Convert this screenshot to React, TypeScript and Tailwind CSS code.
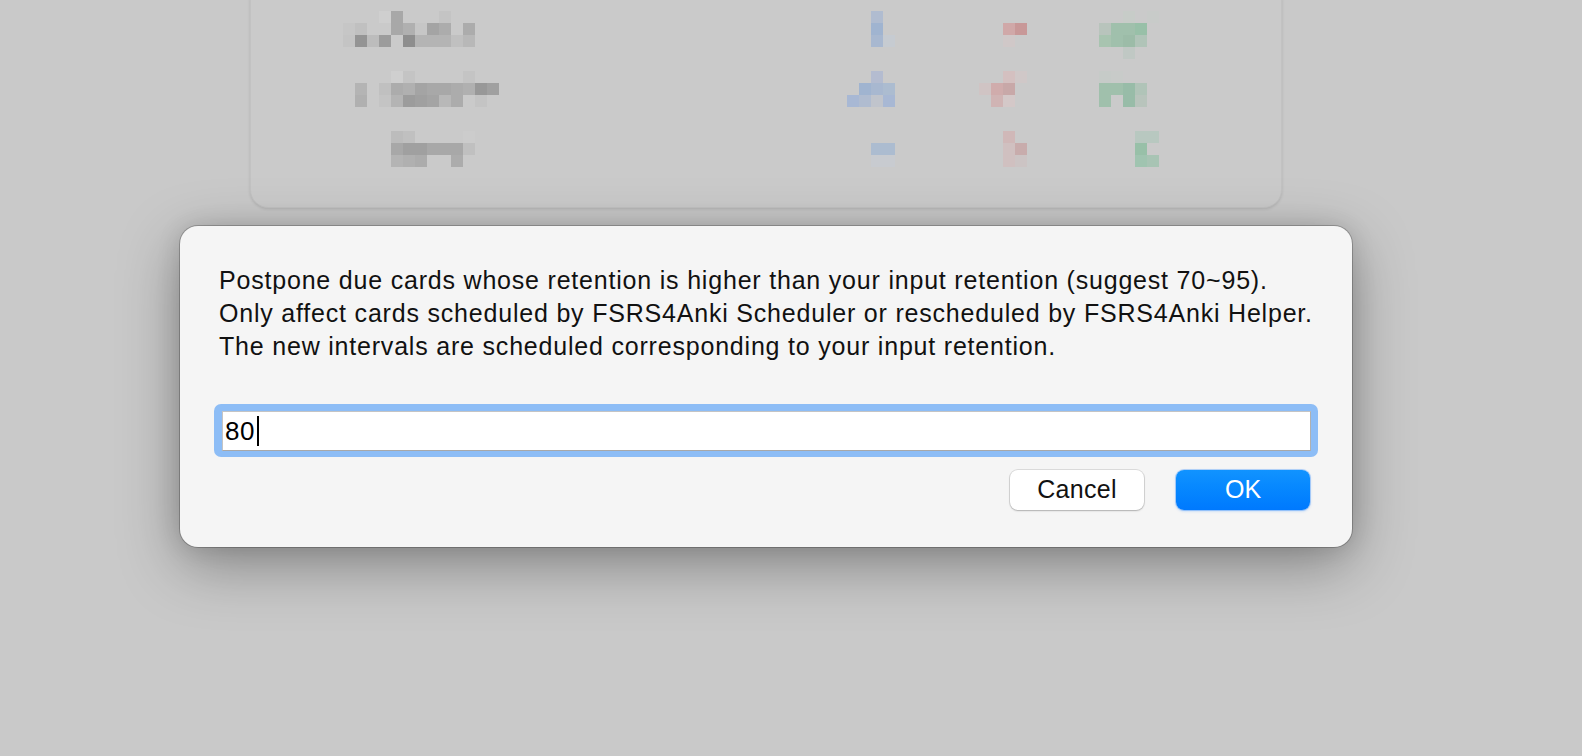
import React from "react"

// Blurred (pixelated) table rows behind the dimmed sheet: [x, y, colour], 12px blocks.
const g = (i: number) => 342 + i * 12

const blocks: [number, number, string][] = [
  // row 1 – label
  [g(3), 10, "#cfcfcf"], [g(4), 10, "#a8a8a8"], [g(8), 10, "#c4c4c4"],
  [g(0), 22, "#c6c6c6"], [g(1), 22, "#c0c0c0"], [g(4), 22, "#a8a8a8"], [g(5), 22, "#b0b0b0"],
  [g(6), 22, "#c6c6c6"], [g(7), 22, "#a4a4a4"], [g(8), 22, "#acacac"], [g(10), 22, "#acacac"],
  [g(0), 34, "#c4c4c4"], [g(1), 34, "#949494"], [g(2), 34, "#bcbcbc"], [g(3), 34, "#9c9c9c"],
  [g(5), 34, "#8e8e8e"], [g(6), 34, "#b4b4b4"], [g(7), 34, "#b4b4b4"], [g(8), 34, "#b4b4b4"],
  [g(9), 34, "#c0c0c0"], [g(10), 34, "#b8b8b8"],
  // row 2 – label
  [g(4), 70, "#cfcfcf"], [g(5), 70, "#c4c4c4"], [g(10), 70, "#c4c4c4"],
  [g(1), 82, "#b4b4b4"], [g(3), 82, "#c0c0c0"], [g(4), 82, "#acacac"], [g(5), 82, "#b0b0b0"],
  [g(6), 82, "#a4a4a4"], [g(7), 82, "#a8a8a8"], [g(8), 82, "#a8a8a8"], [g(9), 82, "#acacac"],
  [g(10), 82, "#b0b0b0"], [g(11), 82, "#989898"], [g(12), 82, "#a0a0a0"],
  [g(1), 94, "#b0b0b0"], [g(3), 94, "#c4c4c4"], [g(4), 94, "#b4b4b4"], [g(5), 94, "#9c9c9c"],
  [g(6), 94, "#a0a0a0"], [g(7), 94, "#a4a4a4"], [g(8), 94, "#b8b8b8"], [g(9), 94, "#acacac"],
  [g(11), 94, "#c4c4c4"],
  // row 3 – label
  [g(4), 130, "#bcbcbc"], [g(5), 130, "#c0c0c0"], [g(10), 130, "#cccccc"],
  [g(4), 142, "#a8a8a8"], [g(5), 142, "#a0a0a0"], [g(6), 142, "#a0a0a0"], [g(7), 142, "#a8a8a8"],
  [g(8), 142, "#a8a8a8"], [g(9), 142, "#a8a8a8"], [g(10), 142, "#c0c0c0"],
  [g(4), 154, "#b4b4b4"], [g(5), 154, "#b0b0b0"], [g(6), 154, "#acacac"], [g(9), 154, "#acacac"],

  // blue column
  [870, 10, "#b0bcd0"], [870, 22, "#a0b4d0"], [870, 34, "#a8b8d0"], [882, 34, "#c6cbd1"],
  [870, 70, "#b4bcd0"], [858, 82, "#a0b4d0"], [870, 82, "#a8b8d0"], [882, 82, "#acbcd0"],
  [846, 94, "#a8b8d4"], [858, 94, "#b0bcd0"], [870, 94, "#c0c4cc"], [882, 94, "#a8b8d4"],
  [870, 142, "#acbcd0"], [882, 142, "#acbcd0"], [870, 154, "#c8cbd0"], [882, 154, "#c8cbd0"],

  // red column
  [1002, 22, "#d0a8a8"], [1014, 22, "#c89898"], [1002, 34, "#d0c8c8"],
  [1002, 70, "#d4c0c0"], [1014, 70, "#d0c8c8"],
  [978, 82, "#d0c4c4"], [990, 82, "#d0acac"], [1002, 82, "#c8a8a8"],
  [990, 94, "#d0b4b4"], [1002, 94, "#d4c8c8"],
  [1002, 130, "#d0b8b8"], [1002, 142, "#d0c0c0"], [1014, 142, "#c8acac"],
  [1002, 154, "#d0c0c0"], [1014, 154, "#ccc4c4"],

  // green column
  [1122, 10, "#c7ccc8"], [1146, 10, "#c8cbc9"],
  [1098, 22, "#b8c4bc"], [1110, 22, "#a0c0ac"], [1122, 22, "#a0c0ac"], [1134, 22, "#98c0a8"],
  [1098, 34, "#a8c4b0"], [1110, 34, "#a0c0ac"], [1122, 34, "#9cbca8"], [1134, 34, "#b0c4b8"],
  [1122, 46, "#c0c8c4"],
  [1098, 70, "#c6cbc8"], [1110, 70, "#c8cbc9"],
  [1098, 82, "#a0c0ac"], [1110, 82, "#a0c0ac"], [1122, 82, "#98bca8"], [1134, 82, "#b0c4b8"],
  [1098, 94, "#a0c0ac"], [1122, 94, "#98bca8"], [1134, 94, "#b8c4bc"],
  [1134, 130, "#b8c8c0"], [1146, 130, "#b8c8c0"], [1134, 142, "#98c0a8"],
  [1134, 154, "#a0c4b0"], [1146, 154, "#a8c4b4"],
]

function BlurredRows() {
  return (
    <svg width="1032" height="206" viewBox="250 0 1032 206" className="block">
      {blocks.map(([x, y, c], i) => (
        <rect key={i} x={x} y={y} width="12" height="12" fill={c} />
      ))}
    </svg>
  )
}

export default function App() {
  return (
    <div
      className="w-full h-[756px] overflow-hidden bg-[#c9c9c9] flex flex-col"
      style={{ fontFamily: '"Liberation Sans", Arial, sans-serif' }}
    >
      {/* dimmed card behind the sheet */}
      <div className="ml-[250px] -mt-5 w-[1032px] h-[228px] pt-5 rounded-[18px] bg-[#cacaca] border border-[#c2c2c2] shadow-[0_1px_3px_rgba(0,0,0,0.12)]">
        <BlurredRows />
      </div>

      {/* sheet */}
      <div className="ml-[180px] mt-[18px] w-[1172px] h-[321px] rounded-[18px] bg-[#f5f5f5] px-[34px] pt-[38px] pb-[37px] flex flex-col shadow-[0_0_0_1px_rgba(0,0,0,0.22),0_18px_60px_rgba(0,0,0,0.34),0_0_24px_rgba(0,0,0,0.12)]">
        <div className="pl-[5px] text-[25px] leading-[33px] tracking-[0.8px] text-[#111] whitespace-nowrap">
          <div>Postpone due cards whose retention is higher than your input retention (suggest 70~95).</div>
          <div>Only affect cards scheduled by FSRS4Anki Scheduler or rescheduled by FSRS4Anki Helper.</div>
          <div>The new intervals are scheduled corresponding to your input retention.</div>
        </div>

        <div className="mt-[41px] h-[53px] rounded-[7px] bg-[#8dbdf6] pt-[7px] pb-[6px] pl-[8px] pr-[7px]">
          <div className="h-full bg-white border border-[#c4c4c4] border-b-[#a8a8a8] border-r-[#b0b0b0] flex items-center pl-[2px]">
            <span className="text-[26px] leading-none tracking-[0.5px] text-black">80</span>
            <span className="ml-[2px] w-[2px] h-[30px] bg-black" />
          </div>
        </div>

        <div className="mt-[13px] pr-[8px] flex justify-end gap-[32px]">
          <button
            type="button"
            className="w-[134px] h-[40px] rounded-[8px] bg-white text-[25px] tracking-[0.3px] text-[#111] shadow-[0_0_0_1px_rgba(0,0,0,0.1),0_1px_2px_rgba(0,0,0,0.2)]"
          >
            Cancel
          </button>
          <button
            type="button"
            className="w-[134px] h-[40px] rounded-[8px] bg-linear-to-b from-[#1193ff] to-[#0079fe] text-[25px] text-white shadow-[0_0_0_1px_rgba(0,110,255,0.25),0_1px_3px_rgba(0,120,255,0.3)]"
          >
            OK
          </button>
        </div>
      </div>
    </div>
  )
}
